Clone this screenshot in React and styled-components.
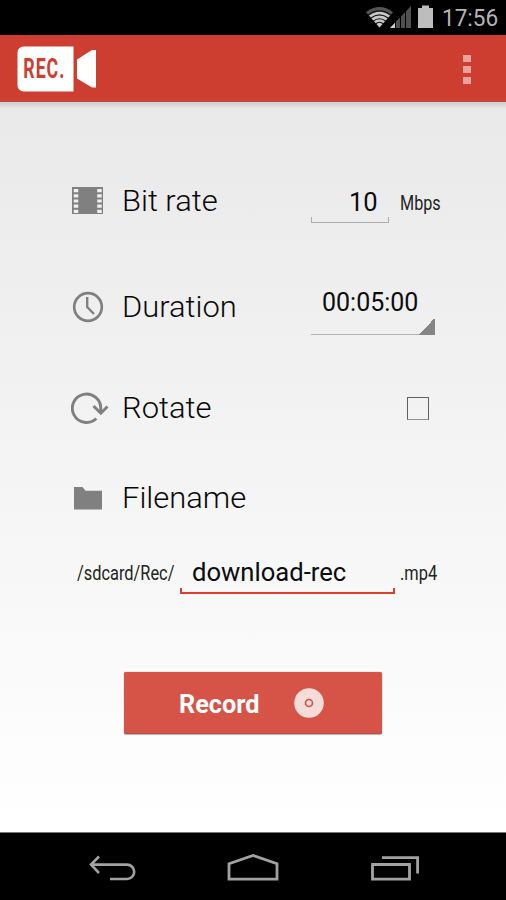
import React from "react";
import styled, { createGlobalStyle } from "styled-components";

const GlobalStyle = createGlobalStyle`
  * { box-sizing: border-box; }
  body { margin: 0; background: #000; font-family: Roboto, "Noto Sans", sans-serif; }
  svg { display: block; flex: none; }
`;

const Screen = styled.div`
  width: 506px;
  height: 900px;
  display: flex;
  flex-direction: column;
  overflow: hidden;
`;

const StatusBar = styled.header`
  height: 35px;
  flex: none;
  background: #000;
  display: flex;
  justify-content: flex-end;
  align-items: center;
  padding-right: 8px;
`;

const Clock = styled.span`
  width: 56.5px;
  margin-left: 7.5px;
  font-size: 23.5px;
  line-height: 37px;
  padding-top: 1px;
  color: #b4b4b4;
  white-space: nowrap;
  transform: scaleX(0.96);
  transform-origin: 0 50%;
`;

const ActionBar = styled.div`
  height: 67px;
  flex: none;
  display: flex;
  justify-content: space-between;
  padding: 11px 35px 0 17px;
  background: #cd3e30;
  border-bottom: 1px solid #ba4a3f;
`;

const LogoText = styled.text`
  font: 700 28px Roboto, sans-serif;
  fill: #cd3e30;
  letter-spacing: 1.5px;
`;

const MenuButton = styled.button`
  display: flex;
  flex-direction: column;
  gap: 4px;
  width: 8px;
  padding: 9px 0 0;
  border: 0;
  background: none;
`;

const MenuDot = styled.i`
  width: 8px;
  height: 7px;
  background: #e9a39c;
`;

const Content = styled.main`
  flex: 1;
  padding: 77px 0 0 71px;
  background:
    linear-gradient(rgba(0, 0, 0, 0.12), rgba(0, 0, 0, 0)) 0 0 / 100% 7px no-repeat,
    linear-gradient(#e9e9e9, #ffffff);
`;

const Row = styled.div`
  display: grid;
  grid-template-columns: 51px 189px 89px 1fr;
  align-items: center;
  height: ${(p) => p.$height || 44}px;
  margin-top: ${(p) => p.$gap || 0}px;
`;

const Label = styled.label`
  font-size: 30px;
  font-weight: 300;
  line-height: 44px;
  color: #080808;
  white-space: nowrap;
  transform: scaleX(1.03);
  transform-origin: 0 50%;
`;

const Unit = styled.span`
  height: 44px;
  padding-top: ${(p) => p.$drop}px;
  font-size: 19.5px;
  line-height: 44px;
  color: #222;
  white-space: nowrap;
  transform: scaleX(${(p) => p.$stretch || 0.84});
  transform-origin: 0 50%;
`;

const Field = styled.div`
  display: flex;
  height: 44px;
  width: ${(p) => p.$width}px;
  padding: ${(p) => p.$pad};
  font-size: 25.5px;
  line-height: 44px;
  color: #0c0c0c;
  white-space: nowrap;
  --edge: ${(p) => (p.$active ? "#d9402f" : "#adadad")};
  --line: ${(p) => (p.$active ? 2 : 1)}px;
  background:
    linear-gradient(var(--edge), var(--edge)) 0 100% / 100% var(--line) no-repeat,
    linear-gradient(var(--edge), var(--edge)) 0 100% / var(--line) 6px no-repeat,
    linear-gradient(var(--edge), var(--edge)) 100% 100% / var(--line) 6px no-repeat;
`;

const Spinner = styled.div`
  width: 124px;
  height: 56px;
  padding-left: 10.5px;
  font-size: 25.5px;
  line-height: 46px;
  color: #0c0c0c;
  white-space: nowrap;
  background:
    linear-gradient(135deg, transparent 50%, #858585 50%) 100% 100% / 17px 17px no-repeat,
    linear-gradient(#b2b2b2, #b2b2b2) 0 100% / 100% 1px no-repeat;
`;

const Value = styled.span`
  display: block;
  width: max-content;
  transform: scaleX(${(p) => p.$stretch || 1});
  transform-origin: 0 50%;
`;

const Checkbox = styled.span`
  width: 22px;
  height: 23px;
  margin-left: 7px;
  border: 1px solid #606060;
  border-bottom-color: #929292;
`;

const PathRow = styled.div`
  display: grid;
  grid-template-columns: 102.5px 220px 1fr;
  height: 44px;
  margin-top: 30px;
  padding-left: 6px;
`;

const RecordButton = styled.button`
  display: flex;
  align-items: center;
  width: 258px;
  height: 62px;
  margin: 78px 0 0 53px;
  padding: 0 0 0 55px;
  border: 0;
  border-bottom: 1px solid #ad5148;
  border-radius: 2px;
  background: #d55447;
  box-shadow: 0 0 1px rgba(100, 30, 20, 0.6), 0 1px 1px rgba(0, 0, 0, 0.25);
  color: #fff;
  font: 700 25.5px/62px Roboto, sans-serif;
`;

const RecordLabel = styled.span`
  width: 115px;
  padding-top: 2px;
  text-align: left;
`;

const NavBar = styled.nav`
  height: 68px;
  flex: none;
  display: flex;
  justify-content: space-between;
  align-items: flex-start;
  padding: 21px 87px 0 88px;
  border-top: 1px solid #777;
  background: #000;
`;

const StatusIcons = () => (
  <svg width="69" height="35" viewBox="365 0 69 35">
    <path d="M366 12.2Q379.500 2 393 12.200L379.500 27.500Z" fill="#555" />
    <path d="M369 15.500Q379.500 8 390 15.500L379.500 27.500Z" fill="#c8c8c8" />
    <g fill="none" stroke="#111" strokeWidth="1.100">
      <path d="M368 15.200Q379.500 6.500 391 15.200" />
      <path d="M370.500 18.300Q379.500 11.500 388.500 18.300" />
      <path d="M373 21.200Q379.500 16.200 386 21.200" />
      <path d="M375.500 24Q379.500 20.500 383.500 24" />
    </g>
    <path d="M411 6V28H390Z" fill="#505050" />
    <path d="M395 22.800V28H390Z" fill="#d0d0d0" />
    <path d="M395.500 6V28M400.500 6V28M405.500 6V28" stroke="#000" strokeWidth="1" />
    <path d="M422 5.500H429V8H433V28H418V8H422Z" fill="#bdbdbd" />
  </svg>
);

const Logo = () => (
  <svg width="80" height="46" viewBox="17 46 80 46" role="img" aria-label="REC.">
    <path d="M23.500 46.500H73.500V91.500H23.500Q21 91.500 19.200 89.500Q17.500 88 17.500 85.500V52.500Q17.500 50 19.200 48.200Q21 46.500 23.500 46.500Z" fill="#fff" />
    <path d="M77 59.500L92 50H96V87.500H92L77 78.500Z" fill="#fff" />
    <LogoText transform="translate(23.300 78) scale(.635 1)">REC.</LogoText>
  </svg>
);

const FilmIcon = () => (
  <svg width="33" height="28" viewBox="71 187 33 28">
    <path d="M72 187H103V214H72Z" fill="#808080" />
    <path
      d="M76 188V213M99.500 188V213"
      stroke="#f0f0f0"
      strokeWidth="4.500"
      strokeDasharray="3.200 2"
      strokeDashoffset="-1"
    />
  </svg>
);

const ClockIcon = () => (
  <svg width="34" height="32" viewBox="71 291 34 32" fill="none" stroke="#808080">
    <circle cx="88" cy="307" r="13.800" strokeWidth="2.700" />
    <path d="M87.200 297V307L94 314" strokeWidth="2.400" />
  </svg>
);

const RotateIcon = () => (
  <svg width="38" height="34" viewBox="71 391 38 34" fill="none" stroke="#808080">
    <path d="M96.300 418.500A14.200 14.200 0 1 1 100.700 409V412.500" strokeWidth="2.900" />
    <path d="M93.500 406L100.800 413.300L107.500 406.500" strokeWidth="2.900" />
  </svg>
);

const FolderIcon = () => (
  <svg width="34" height="24" viewBox="71 486 34 24">
    <path d="M74 487H82.500L85.500 490.800H102V509.500H74Z" fill="#808080" />
  </svg>
);

const DiscIcon = () => (
  <svg width="30" height="30" viewBox="0 0 30 30">
    <circle cx="15" cy="15" r="14.800" fill="#f6dcd9" />
    <circle cx="15" cy="15" r="3.500" fill="none" stroke="#d55447" strokeWidth="1.700" />
  </svg>
);

const BackIcon = () => (
  <svg width="50" height="28" viewBox="88 854 50 28" fill="none" stroke="#a2a2a2" strokeWidth="2.600">
    <path d="M91 864.600H127A7.200 7.200 0 0 1 127 879H110" />
    <path d="M99 856.500L91 864.600L99 873" />
  </svg>
);

const HomeIcon = () => (
  <svg width="54" height="28" viewBox="227 854 54 28">
    <path d="M229 863.700L253 855.500L277 863.700V879.200H229Z" fill="none" stroke="#a2a2a2" strokeWidth="2.800" />
  </svg>
);

const RecentsIcon = () => (
  <svg width="50" height="28" viewBox="369 854 50 28" fill="none" stroke="#a2a2a2" strokeWidth="2.800">
    <path d="M372.500 864.500H409.500V879.200H372.500Z" />
    <path d="M382 857.600H417.600V873.500" />
  </svg>
);

export default function App() {
  return (
    <Screen>
      <GlobalStyle />
      <StatusBar>
        <StatusIcons />
        <Clock>17:56</Clock>
      </StatusBar>
      <ActionBar>
        <Logo />
        <MenuButton aria-label="Menu">
          <MenuDot />
          <MenuDot />
          <MenuDot />
        </MenuButton>
      </ActionBar>
      <Content>
        <Row>
          <FilmIcon />
          <Label>Bit rate</Label>
          <Field $width={78} $pad="1px 0 0 38px"><Value>10</Value></Field>
          <Unit $drop={3} $stretch={0.83}>Mbps</Unit>
        </Row>
        <Row $height={56} $gap={56}>
          <ClockIcon />
          <Label>Duration</Label>
          <Spinner><Value $stretch={0.98}>00:05:00</Value></Spinner>
        </Row>
        <Row $gap={51}>
          <RotateIcon />
          <Label>Rotate</Label>
          <span />
          <Checkbox />
        </Row>
        <Row $gap={46}>
          <FolderIcon />
          <Label>Filename</Label>
        </Row>
        <PathRow>
          <Unit $drop={2}>/sdcard/Rec/</Unit>
          <Field $active $width={215} $pad="0 0 0 12px"><Value $stretch={1.005}>download-rec</Value></Field>
          <Unit $drop={2}>.mp4</Unit>
        </PathRow>
        <RecordButton>
          <RecordLabel><Value $stretch={0.99}>Record</Value></RecordLabel>
          <DiscIcon />
        </RecordButton>
      </Content>
      <NavBar>
        <BackIcon />
        <HomeIcon />
        <RecentsIcon />
      </NavBar>
    </Screen>
  );
}
